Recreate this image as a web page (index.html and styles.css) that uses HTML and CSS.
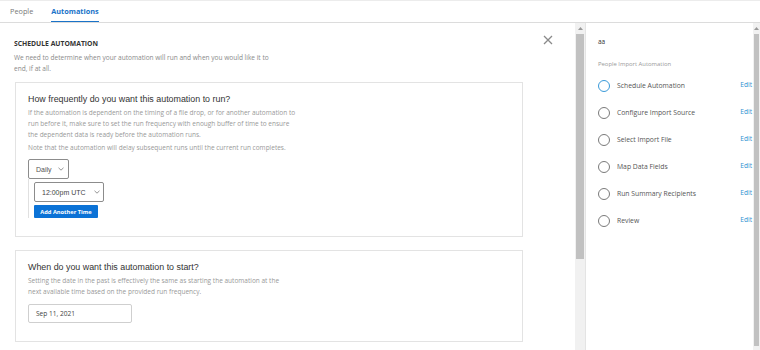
FILE: index.html
```html
<!DOCTYPE html>
<html>
<head>
<meta charset="utf-8">
<link rel="stylesheet" href="styles.css">
</head>
<body>
<div class="tabs">
  <div class="tab">People</div>
  <div class="tab active">Automations</div>
</div>
<div class="layout">
  <div class="main">
    <div class="header">
      <div>
        <h1 class="section-title">SCHEDULE AUTOMATION</h1>
        <p class="intro">We need to determine when your automation will run and when you would like it to<br>end, if at all.</p>
      </div>
      <svg class="close" width="10" height="10" viewBox="0 0 10 10"><path d="M1 1L9 9M9 1L1 9" stroke="#8a8a8a" stroke-width="1.3" fill="none"/></svg>
    </div>
    <div class="card card-freq">
      <h2 class="card-title">How frequently do you want this automation to run?</h2>
      <p class="help">If the automation is dependent on the timing of a file drop, or for another automation to<br>run before it, make sure to set the run frequency with enough buffer of time to ensure<br>the dependent data is ready before the automation runs.</p>
      <p class="help note">Note that the automation will delay subsequent runs until the current run completes.</p>
      <div class="select select-daily"><span>Daily</span><svg width="6" height="4" viewBox="0 0 6 4"><path d="M0.5 0.8L3 3.2L5.5 0.8" stroke="#777" stroke-width="0.8" fill="none"/></svg></div>
      <div class="times">
        <div class="select select-time"><span>12:00pm UTC</span><svg width="6" height="4" viewBox="0 0 6 4"><path d="M0.5 0.8L3 3.2L5.5 0.8" stroke="#777" stroke-width="0.8" fill="none"/></svg></div>
        <button class="btn">Add Another Time</button>
      </div>
    </div>
    <div class="card card-start">
      <h2 class="card-title">When do you want this automation to start?</h2>
      <p class="help">Setting the date in the past is effectively the same as starting the automation at the<br>next available time based on the provided run frequency.</p>
      <div class="date-input">Sep 11, 2021</div>
    </div>
  </div>
  <div class="scrollbar scroll-main">
    <div class="arrow"><svg width="5" height="3" viewBox="0 0 5 3"><path d="M0 3L2.5 0L5 3Z" fill="#999"/></svg></div>
    <div class="thumb thumb-main"></div>
  </div>
  <div class="gap-strip"></div>
  <div class="side">
    <div class="side-name">aa</div>
    <div class="side-label">People Import Automation</div>
    <ul class="steps">
      <li class="step current"><span class="circle"></span><span class="step-name">Schedule Automation</span><span class="edit">Edit</span></li>
      <li class="step"><span class="circle"></span><span class="step-name">Configure Import Source</span><span class="edit">Edit</span></li>
      <li class="step"><span class="circle"></span><span class="step-name">Select Import File</span><span class="edit">Edit</span></li>
      <li class="step"><span class="circle"></span><span class="step-name">Map Data Fields</span><span class="edit">Edit</span></li>
      <li class="step"><span class="circle"></span><span class="step-name">Run Summary Recipients</span><span class="edit">Edit</span></li>
      <li class="step"><span class="circle"></span><span class="step-name">Review</span><span class="edit">Edit</span></li>
    </ul>
  </div>
  <div class="scrollbar scroll-side">
    <div class="arrow"><svg width="5" height="3" viewBox="0 0 5 3"><path d="M0 3L2.5 0L5 3Z" fill="#999"/></svg></div>
    <div class="thumb thumb-side"></div>
  </div>
</div>
</body>
</html>
```
FILE: styles.css
```css
html, body {
  margin: 0;
  padding: 0;
  background: #fff;
  font-family: "Open Sans", "Liberation Sans", sans-serif;
  color: #333;
  overflow: hidden;
}
.tabs {
  height: 21px;
  border-top: 1px solid #ececec;
  border-bottom: 1px solid #dcdcdc;
  display: flex;
  padding-left: 10px;
  gap: 18px;
}
.tab {
  font-size: 7.3px;
  line-height: 20px;
  color: #777;
  height: 20px;
}
.tab.active {
  color: #1a73c8;
  font-weight: 700;
  border-bottom: 1.5px solid #1a73c8;
}
.layout {
  display: flex;
  height: 327px;
}
.main {
  width: 575px;
  box-sizing: border-box;
  padding: 15px 22px 0 14px;
}
.header {
  display: flex;
  justify-content: space-between;
  align-items: flex-start;
}
.section-title {
  margin: 0;
  font-size: 6.8px;
  font-weight: 700;
  color: #333;
  line-height: 12px;
}
.intro {
  margin: 2px 0 0;
  font-size: 6.55px;
  line-height: 11px;
  color: #8a8a8a;
}
.close {
  margin-top: -3px;
}
.card {
  width: 508px;
  box-sizing: border-box;
  border: 1px solid #e3e3e3;
  padding: 10px 12px 18px;
  margin-left: 1px;
}
.card-freq {
  margin-top: 8px;
}
.card-start {
  margin-top: 13px;
}
.card-title {
  margin: 0;
  font-family: "Liberation Sans", Arial, sans-serif;
  font-size: 8.9px;
  font-weight: 400;
  line-height: 12px;
  color: #333;
}
.help {
  margin: 2px 0 0;
  font-size: 6.5px;
  line-height: 11px;
  color: #999;
}
.select {
  display: inline-flex;
  align-items: center;
  box-sizing: border-box;
  border: 1px solid #8c8c8c;
  border-radius: 2px;
  font-family: "Liberation Sans", Arial, sans-serif;
  font-size: 7px;
  color: #555;
  padding: 0 0 0 7px;
}
.select svg {
  margin-left: 6px;
}
.select-daily {
  margin-top: 6px;
  width: 41px;
  height: 20px;
}
.times {
  border-left: 1px solid #e0e0e0;
  padding: 3px 0 0 5px;
  display: flex;
  flex-direction: column;
  align-items: flex-start;
}
.select-time {
  width: 70px;
  height: 20px;
  color: #444;
}
.select-time svg {
  margin-left: 8px;
}
.btn {
  margin-top: 3px;
  height: 13px;
  width: 64px;
  padding: 0;
  border: 0;
  border-radius: 1px;
  background: #0b72d6;
  color: #fff;
  font-family: inherit;
  font-size: 5.7px;
  font-weight: 700;
}
.date-input {
  margin-top: 7px;
  width: 104px;
  height: 19px;
  box-sizing: border-box;
  border: 1px solid #cfcfcf;
  border-radius: 2px;
  font-size: 6.6px;
  line-height: 17px;
  padding-left: 7px;
  color: #444;
}
.scrollbar {
  background: #f1f1f1;
  display: flex;
  flex-direction: column;
}
.scroll-main {
  width: 10px;
}
.scroll-side {
  width: 7px;
}
.arrow {
  height: 11px;
  display: flex;
  align-items: center;
  justify-content: center;
}
.thumb {
  background: #c1c1c1;
  margin: 0 1px;
}
.thumb-main {
  height: 225px;
}
.thumb-side {
  height: 312px;
}
.gap-strip {
  width: 1px;
  background: #e4e4e4;
}
.side {
  flex: 1;
  padding: 14px 1px 0 12px;
  box-sizing: border-box;
  min-width: 0;
}
.side-name {
  font-size: 6.5px;
  line-height: 10px;
  color: #333;
}
.side-label {
  margin-top: 12px;
  font-size: 5.9px;
  line-height: 10px;
  color: #999;
}
.steps {
  list-style: none;
  margin: 3px 0 0;
  padding: 0;
}
.step {
  display: flex;
  align-items: center;
  height: 27px;
}
.circle {
  width: 10px;
  height: 10px;
  border-radius: 50%;
  border: 1.2px solid #7a7a7a;
  flex: none;
}
.step.current .circle {
  border-color: #3a9ad9;
}
.step-name {
  margin-left: 7px;
  font-size: 6.8px;
  color: #555;
  flex: 1;
}
.edit {
  font-size: 6.6px;
  color: #2b8fd0;
  margin-top: -3px;
  flex: none;
}
```
